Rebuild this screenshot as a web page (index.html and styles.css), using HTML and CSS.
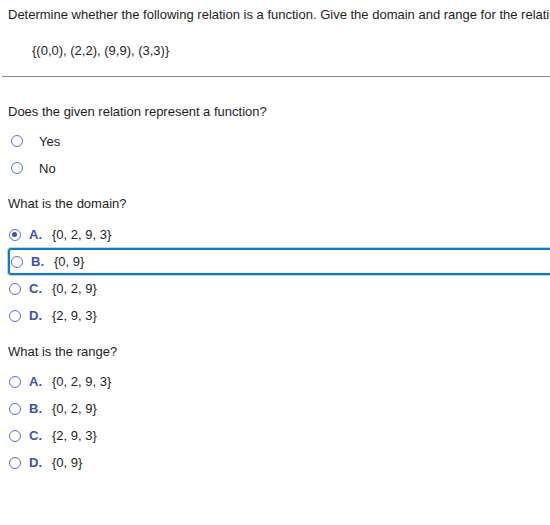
FILE: index.html
```html
<!DOCTYPE html>
<html>
<head>
<meta charset="utf-8">
<link rel="stylesheet" href="styles.css">
</head>
<body>
<div class="page">
  <p class="intro">Determine whether the following relation is a function. Give the domain and range for the relation.</p>
  <p class="set">{(0,0), (2,2), (9,9), (3,3)}</p>
  <hr class="rule">
  <p class="question q1">Does the given relation represent a function?</p>
  <div class="yn">
    <div class="yn-opt"><span class="radio"></span><span>Yes</span></div>
    <div class="yn-opt"><span class="radio"></span><span>No</span></div>
  </div>
  <p class="question">What is the domain?</p>
  <div class="choices">
    <div class="choice"><span class="radio checked"></span><span class="letter">A.</span><span class="val">{0, 2, 9, 3}</span></div>
    <div class="choice focused"><span class="radio"></span><span class="letter">B.</span><span class="val">{0, 9}</span></div>
    <div class="choice"><span class="radio"></span><span class="letter">C.</span><span class="val">{0, 2, 9}</span></div>
    <div class="choice"><span class="radio"></span><span class="letter">D.</span><span class="val">{2, 9, 3}</span></div>
  </div>
  <p class="question">What is the range?</p>
  <div class="choices range">
    <div class="choice"><span class="radio"></span><span class="letter">A.</span><span class="val">{0, 2, 9, 3}</span></div>
    <div class="choice"><span class="radio"></span><span class="letter">B.</span><span class="val">{0, 2, 9}</span></div>
    <div class="choice"><span class="radio"></span><span class="letter">C.</span><span class="val">{2, 9, 3}</span></div>
    <div class="choice"><span class="radio"></span><span class="letter">D.</span><span class="val">{0, 9}</span></div>
  </div>
</div>
</body>
</html>
```

FILE: styles.css
```css
html, body {
  margin: 0;
  padding: 0;
  background: #fff;
}
body {
  font-family: "Liberation Sans", Arial, sans-serif;
  font-size: 13px;
  color: #1e1e1e;
  overflow: hidden;
}
.page {
  width: 550px;
  overflow: hidden;
}
p { margin: 0; }
.intro {
  white-space: nowrap;
  padding: 7px 0 0 8px;
  line-height: 16px;
}
.set {
  padding: 20px 0 0 32px;
  line-height: 16px;
}
.rule {
  margin: 17px 0 0 2px;
  border: 0;
  height: 1px;
  background: #8a8d91;
}
.question {
  padding-left: 8px;
  line-height: 16px;
}
.q1 { margin-top: 27px; }
.yn {
  display: flex;
  flex-direction: column;
  gap: 11px;
  margin: 13px 0 20px;
}
.yn-opt {
  display: flex;
  align-items: center;
  height: 16px;
  padding-left: 11px;
  gap: 16px;
}
.radio {
  box-sizing: border-box;
  width: 12px;
  height: 12px;
  border: 1.5px solid #5a6ed6;
  border-radius: 50%;
  flex: none;
  position: relative;
}
.radio.checked::after {
  content: "";
  position: absolute;
  left: 2px;
  top: 2px;
  width: 5px;
  height: 5px;
  border-radius: 50%;
  background: #3c4fc2;
}
.choices {
  display: flex;
  flex-direction: column;
  margin: 9px 0 15px;
}
.choices.range { margin-top: 8px; }
.choice {
  display: flex;
  align-items: center;
  height: 27px;
  padding-left: 9px;
}
.choice .radio { margin-right: 8px; }
.letter {
  color: #3f4fb5;
  font-weight: bold;
  width: 23px;
}
.focused {
  box-sizing: border-box;
  margin-left: 8px;
  padding-left: 1px;
  border: 2px solid #1577c7;
  border-right: none;
  border-radius: 3px 0 0 3px;
  box-shadow: 0 0 0 1px #b5d6ef;
  width: 560px;
}
```
